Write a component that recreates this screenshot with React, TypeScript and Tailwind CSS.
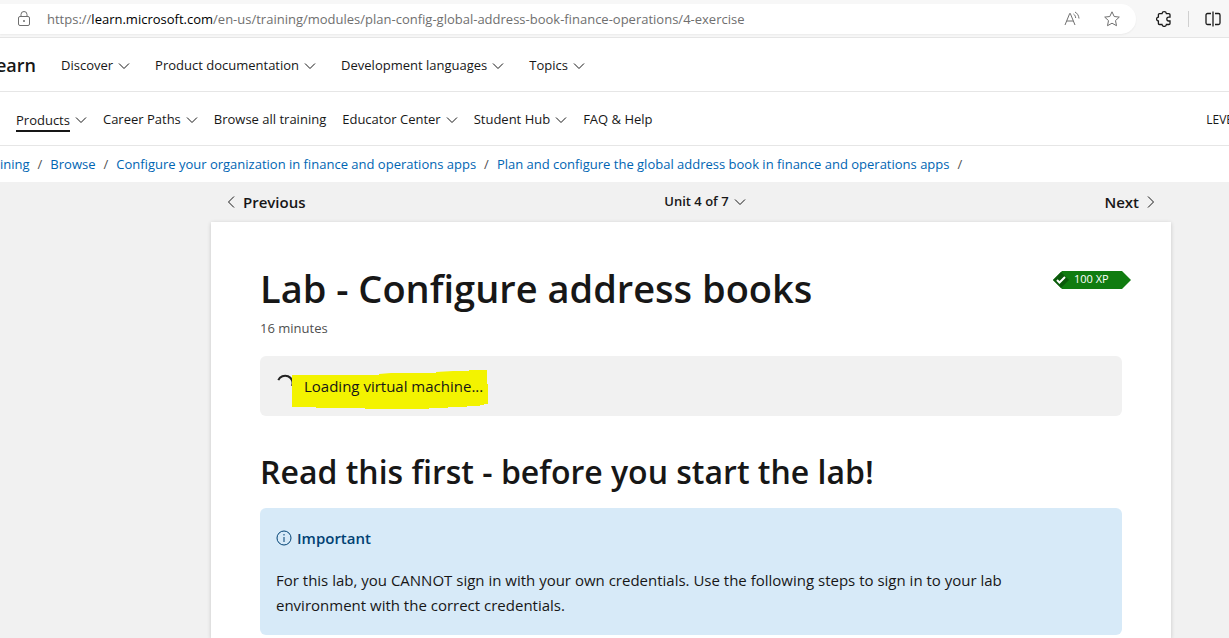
import type { ReactNode } from "react";

const siteLinks = ["Discover", "Product documentation", "Development languages", "Topics"];

const trainingLinks = [
  { label: "Products", menu: true, active: true },
  { label: "Career Paths", menu: true },
  { label: "Browse all training" },
  { label: "Educator Center", menu: true },
  { label: "Student Hub", menu: true },
  { label: "FAQ & Help" },
];

const crumbs = [
  "ining",
  "Browse",
  "Configure your organization in finance and operations apps",
  "Plan and configure the global address book in finance and operations apps",
];

function Icon({ className, children }: { className: string; children: ReactNode }) {
  return (
    <svg viewBox="0 0 16 16" fill="none" stroke="currentColor" className={`shrink-0 ${className}`} aria-hidden="true">
      {children}
    </svg>
  );
}

function ChevronDown() {
  return (
    <svg viewBox="0 0 12 12" fill="none" stroke="currentColor" className="size-3 shrink-0" aria-hidden="true">
      <path d="M1 3.5 6 8.5 11 3.5" />
    </svg>
  );
}

function BrowserBar() {
  return (
    <div className="flex h-[38px] items-center border-b border-[#e5e5e5] bg-[#f7f7f7] text-[#6f6f6f]">
      <div className="flex h-[30px] min-w-0 flex-1 items-center rounded-r-full rounded-l-2xl bg-white px-4 shadow-xs">
        <Icon className="size-4">
          <rect x="2.5" y="5.5" width="11" height="9" rx="1.5" />
          <path d="M5 5.5V3.5a3 3 0 0 1 6 0v2" />
          <circle cx="8" cy="10" r="0.6" fill="currentColor" />
        </Icon>
        <div className="ml-[15px] min-w-0 flex-1 truncate text-[13px] leading-5">
          https://<span className="text-black">learn.microsoft.com</span>
          /en-us/training/modules/plan-config-global-address-book-finance-operations/4-exercise
        </div>
        <button type="button" aria-label="Read aloud">
          <Icon className="size-4">
            <path d="M1 14 5.7 2.5h.6L11 14M2.8 10h6.4M9.5 3c1.3.9 2 2.2 2.2 4M11 1c2.4 1.4 3.7 3.5 4 6.5" />
          </Icon>
        </button>
        <button type="button" aria-label="Add to favorites" className="ml-6">
          <Icon className="size-4">
            <path
              d="m8 .8 2.2 4.7 5.1.6-3.8 3.5 1 5.1L8 12.200l-4.500 2.500 1-5.100L.7 6.100l5.100-.6z"
              strokeLinejoin="round"
            />
          </Icon>
        </button>
      </div>
      <div className="flex items-center gap-4 px-5 pr-2 text-[#1a1a1a]">
        <button type="button" aria-label="Extensions">
          <Icon className="size-4">
            <path
              d="M3.500 2.600H6C6.200 1.300 7 .7 8.200.7s2 .6 2.200 1.900h2.500c.7 0 1.100.4 1.100 1.100v2.500h-1.300c-1.200 0-1.900.8-1.900 1.900s.7 1.900 1.900 1.900H14v2.400c0 .7-.4 1.100-1.100 1.100h-2.500c-.2 1.300-1 1.900-2.200 1.900s-2-.6-2.200-1.900H3.500c-.7 0-1.100-.4-1.100-1.100V10C1.200 9.900.6 9.100.6 8.100s.6-1.800 1.800-1.900V3.700c0-.7.4-1.100 1.100-1.100z"
              strokeWidth="1.3"
            />
          </Icon>
        </button>
        <span className="h-4 w-px bg-[#d0d0d0]" />
        <button type="button" aria-label="Split screen">
          <Icon className="size-4">
            <path
              d="M6 2.500H2.500a1.500 1.500 0 0 0-1.500 1.500v8a1.500 1.500 0 0 0 1.500 1.500H6M10 2.500h3.500A1.500 1.500 0 0 1 15 4v8a1.500 1.500 0 0 1-1.500 1.500H10M8 .5v15"
              strokeWidth="1.3"
            />
          </Icon>
        </button>
      </div>
    </div>
  );
}

export default function App() {
  return (
    <div className="flex min-h-screen flex-col overflow-hidden bg-white font-['Open_Sans','Noto_Sans',sans-serif] text-[13px] text-[#171717]">
      <BrowserBar />

      <header>
        <nav
          aria-label="Site"
          className="flex h-[54px] items-center gap-[25px] border-b border-[#e6e6e6] pt-0.5 whitespace-nowrap"
        >
          <a href="#learn" className="-ml-1 text-[18px] font-semibold">
            earn
          </a>
          {siteLinks.map((label) => (
            <button type="button" key={label} className="flex items-center gap-[5px]">
              {label}
              <ChevronDown />
            </button>
          ))}
        </nav>
        <nav
          aria-label="Training"
          className="flex h-[54px] items-center gap-4 border-b border-[#e6e6e6] pt-0.5 pl-4 whitespace-nowrap"
        >
          {trainingLinks.map(({ label, menu, active }) =>
            menu ? (
              <button type="button" key={label} className="flex items-center gap-[5px]">
                <span className={active ? "-mb-1 border-b-2 border-[#171717]" : ""}>{label}</span>
                <ChevronDown />
              </button>
            ) : (
              <a href="#training" key={label}>
                {label}
              </a>
            ),
          )}
          <span className="-mr-1 ml-auto text-[12px]">LEVE</span>
        </nav>
      </header>

      <nav aria-label="Breadcrumb" className="h-9 leading-9 whitespace-nowrap">
        <ol className="flex">
          {crumbs.map((crumb) => (
            <li key={crumb} className="flex">
              <a href="#module" className="text-[#0065b3]">
                {crumb}
              </a>
              <span className="px-2 text-[#505050]">/</span>
            </li>
          ))}
        </ol>
      </nav>

      <main className="flex flex-1 flex-col bg-[#f1f1f1] pr-[58px] pl-[211px]">
        <div className="flex h-10 items-center justify-between px-4 text-[15px] font-semibold">
          <a href="#previous" className="flex items-center gap-2">
            <svg viewBox="0 0 8 12" fill="none" stroke="currentColor" className="h-3 w-2" aria-hidden="true">
              <path d="M7 .5 1.5 6 7 11.5" />
            </svg>
            Previous
          </a>
          <button type="button" className="flex items-center gap-[5px] text-[13px]">
            Unit 4 of 7
            <ChevronDown />
          </button>
          <a href="#next" className="flex items-center gap-2">
            Next
            <svg viewBox="0 0 8 12" fill="none" stroke="currentColor" className="h-3 w-2" aria-hidden="true">
              <path d="M1 .5 6.5 6 1 11.5" />
            </svg>
          </a>
        </div>

        <article className="flex-1 bg-white px-[49px] pt-10 pb-[3px] shadow-[0_1px_4px_rgba(0,0,0,0.18)]">
          <div className="flex items-start justify-between">
            <h1 className="text-[38px] leading-[52px] font-semibold">Lab - Configure address books</h1>
            <div className="relative -mr-[9px] mt-[9px] h-[18px] w-[78px] text-[11px] leading-4 text-white">
              <svg viewBox="0 0 78 18" className="absolute inset-0" aria-hidden="true">
                <path d="M9 0h60l9 9-9 9H9L0 9z" fill="#107c10" />
                <path d="m8 1 8 8-8 8-8-8z" fill="#0b5a0b" />
                <path d="m4 9 2.5 2.5L12 6" fill="none" stroke="#fff" strokeWidth="2" />
              </svg>
              <span className="relative ml-[21px]">100 XP</span>
            </div>
          </div>
          <p className="mt-1 leading-5 text-[#505050]">16 minutes</p>

          <div role="status" className="mt-[18px] flex h-[60px] items-start rounded-md bg-[#f1f1f1] pt-[14px] pl-4 text-[15px]">
            <svg viewBox="0 0 18 18" className="mt-1 size-[18px]" fill="none" stroke="#222" strokeWidth="2" aria-hidden="true">
              <path d="M2.300 6.200A7.300 7.300 0 0 1 16 12" />
            </svg>
            <div className="relative -ml-0.5 h-10 w-[197px] leading-8">
              <svg viewBox="0 0 197 40" className="absolute inset-0" aria-hidden="true">
                <path
                  d="M0 5h87V4l12-1h45V2l17-1h16V0h18v14h1v20h-4v1h-4v1h-13v1h-19v1h-19v1H73v-1H24v-1H0z"
                  fill="#f3f300"
                />
              </svg>
              <span className="relative ml-3">Loading virtual machine...</span>
            </div>
          </div>

          <h2 className="mt-8 text-[32px] leading-12 font-semibold">Read this first - before you start the lab!</h2>

          <section className="mt-3 rounded-md bg-[#d7eaf8] p-4 pb-[17px] text-[15px] leading-[25px]">
            <p className="flex items-center gap-[5px] leading-7 font-semibold text-[#004173]">
              <Icon className="size-4">
                <circle cx="8" cy="8" r="7" />
                <path d="M8 7v5M8 4v1.5" />
              </Icon>
              Important
            </p>
            <p className="mt-4 max-w-3xl">
              For this lab, you CANNOT sign in with your own credentials. Use the following steps to sign in to your lab
              environment with the correct credentials.
            </p>
          </section>
        </article>
      </main>
    </div>
  );
}
